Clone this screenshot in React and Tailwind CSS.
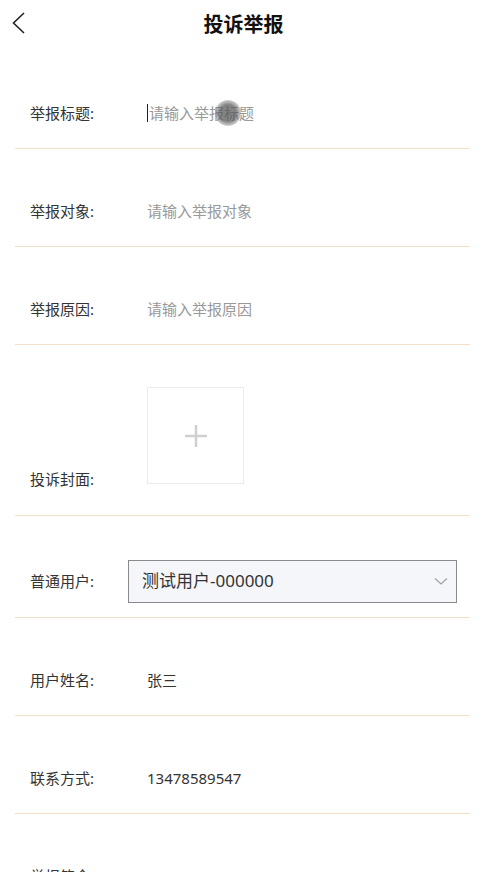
import React from 'react';

const font = { fontFamily: '"Noto Sans", "Noto Sans CJK SC", sans-serif' };

function Row({ label, children }) {
  return (
    <div className="flex items-center h-[98px] pt-[48px] pb-[22px] border-b border-[#f2e0c6]">
      <div className="w-[132px] pl-[15px] text-[15px] text-[#333] leading-[28px]">{label}</div>
      <div className="flex-1 text-[15px] leading-[28px]">{children}</div>
    </div>
  );
}

export default function App() {
  return (
    <div className="w-[487px] h-[872px] bg-white overflow-hidden relative" style={font}>
      <div className="h-[51px] flex items-center justify-center relative">
        <svg className="absolute left-[10px] top-[11px]" width="18" height="24" viewBox="0 0 18 24">
          <path d="M14 2 L3.5 12 L14 22" fill="none" stroke="#222" strokeWidth="1.6" />
        </svg>
        <h1 className="text-[20px] font-bold text-[#111] -mt-[2px]">投诉举报</h1>
      </div>

      <div className="pl-[15px] pr-[17px]">
        <Row label="举报标题:">
          <div className="relative flex items-center">
            <span className="w-px h-[18px] bg-[#222] mr-[1px]" />
            <span className="text-[#999]">请输入举报标题</span>
            <span className="absolute left-[68px] top-[1px] w-[26px] h-[26px] rounded-full bg-[radial-gradient(circle,rgba(90,90,90,0.75)_45%,rgba(120,120,120,0.35)_70%,rgba(255,255,255,0)_75%)]" />
          </div>
        </Row>
        <Row label="举报对象:">
          <span className="text-[#999]">请输入举报对象</span>
        </Row>
        <Row label="举报原因:">
          <span className="text-[#999]">请输入举报原因</span>
        </Row>

        <div className="flex items-end h-[171px] pt-[43px] pb-[31px] border-b border-[#f2e0c6]">
          <div className="w-[132px] pl-[15px] text-[15px] text-[#333] leading-none -mb-[3px]">投诉封面:</div>
          <div className="w-[97px] h-[97px] border border-[#ebebeb] flex items-center justify-center">
            <svg width="24" height="24" viewBox="0 0 24 24">
              <path d="M12 1v22M1 12h22" stroke="#d0d0d0" strokeWidth="2.5" />
            </svg>
          </div>
        </div>

        <div className="flex items-center h-[102px] pt-[44px] pb-[15px] border-b border-[#f2e0c6]">
          <div className="w-[113px] pl-[15px] text-[15px] text-[#333]">普通用户:</div>
          <div className="w-[329px] h-[43px] bg-[#f5f6fa] border border-[#8a8a8a] flex items-center justify-between pl-[13px] pr-[8px]">
            <span className="text-[17px] text-[#333]">测试用户-000000</span>
            <svg width="14" height="10" viewBox="0 0 14 10">
              <path d="M1 2.5 L7 8 L13 2.5" fill="none" stroke="#a0a0a0" strokeWidth="1.2" />
            </svg>
          </div>
        </div>

        <Row label="用户姓名:">
          <span className="text-[#333]">张三</span>
        </Row>
        <Row label="联系方式:">
          <span className="text-[#333]">13478589547</span>
        </Row>
        <div className="pt-[48px] pl-[15px] text-[15px] text-[#333] leading-[28px]">举报简介:</div>
      </div>
    </div>
  );
}
